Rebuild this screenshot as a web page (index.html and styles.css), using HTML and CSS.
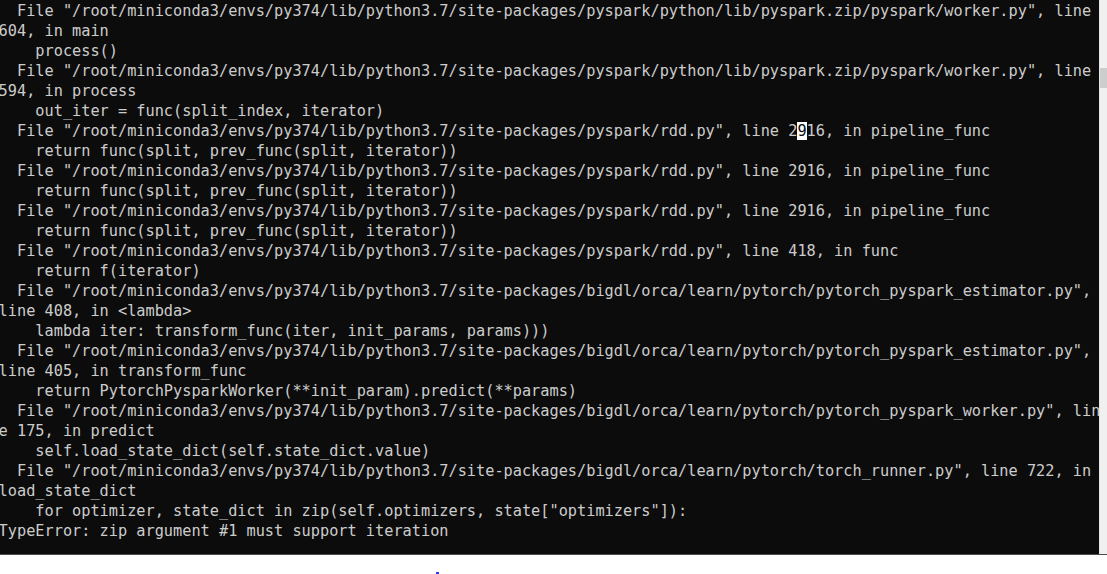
FILE: index.html
```html
<!DOCTYPE html>
<html>
<head>
<meta charset="utf-8">
<link rel="stylesheet" href="styles.css">
</head>
<body>
<div class="window">
  <div class="console">
<pre class="output">  File "/root/miniconda3/envs/py374/lib/python3.7/site-packages/pyspark/python/lib/pyspark.zip/pyspark/worker.py", line
604, in main
    process()
  File "/root/miniconda3/envs/py374/lib/python3.7/site-packages/pyspark/python/lib/pyspark.zip/pyspark/worker.py", line
594, in process
    out_iter = func(split_index, iterator)
  File "/root/miniconda3/envs/py374/lib/python3.7/site-packages/pyspark/rdd.py", line 2<span class="cursor">9</span>16, in pipeline_func
    return func(split, prev_func(split, iterator))
  File "/root/miniconda3/envs/py374/lib/python3.7/site-packages/pyspark/rdd.py", line 2916, in pipeline_func
    return func(split, prev_func(split, iterator))
  File "/root/miniconda3/envs/py374/lib/python3.7/site-packages/pyspark/rdd.py", line 2916, in pipeline_func
    return func(split, prev_func(split, iterator))
  File "/root/miniconda3/envs/py374/lib/python3.7/site-packages/pyspark/rdd.py", line 418, in func
    return f(iterator)
  File "/root/miniconda3/envs/py374/lib/python3.7/site-packages/bigdl/orca/learn/pytorch/pytorch_pyspark_estimator.py",
line 408, in &lt;lambda&gt;
    lambda iter: transform_func(iter, init_params, params)))
  File "/root/miniconda3/envs/py374/lib/python3.7/site-packages/bigdl/orca/learn/pytorch/pytorch_pyspark_estimator.py",
line 405, in transform_func
    return PytorchPysparkWorker(**init_param).predict(**params)
  File "/root/miniconda3/envs/py374/lib/python3.7/site-packages/bigdl/orca/learn/pytorch/pytorch_pyspark_worker.py", lin
e 175, in predict
    self.load_state_dict(self.state_dict.value)
  File "/root/miniconda3/envs/py374/lib/python3.7/site-packages/bigdl/orca/learn/pytorch/torch_runner.py", line 722, in
load_state_dict
    for optimizer, state_dict in zip(self.optimizers, state["optimizers"]):
TypeError: zip argument #1 must support iteration</pre>
  </div>
  <div class="scrollbar"><div class="thumb"></div></div>
</div>
<div class="below"><span class="mark"></span></div>
</body>
</html>
```
FILE: styles.css
```css
html, body {
  margin: 0;
  padding: 0;
  background: #ffffff;
}
body {
  width: 1107px;
  height: 574px;
  overflow: hidden;
}
.window {
  display: flex;
  height: 554px;
  border-bottom: 1px solid #4c4c4c;
}
.console {
  width: 1100px;
  height: 554px;
  background: #0c0c0c;
  overflow: hidden;
}
.output {
  margin: 1px 0 0 -1.4px;
  font-family: "DejaVu Sans Mono", monospace;
  font-size: 15.25px;
  line-height: 20px;
  color: #cccccc;
  white-space: pre;
}
.cursor {
  background: #ffffff;
  color: #0c0c0c;
}
.scrollbar {
  width: 7px;
  background: #f0f0f0;
  border-left: 1px solid #e6e6e6;
  display: flex;
  flex-direction: column;
  padding-top: 68px;
}
.thumb {
  height: 20px;
  background: #cdcdcd;
}
.below {
  height: 19px;
  display: flex;
  align-items: flex-end;
  padding-left: 436px;
}
.mark {
  width: 3px;
  height: 2px;
  background: #2a3cff;
}
```
